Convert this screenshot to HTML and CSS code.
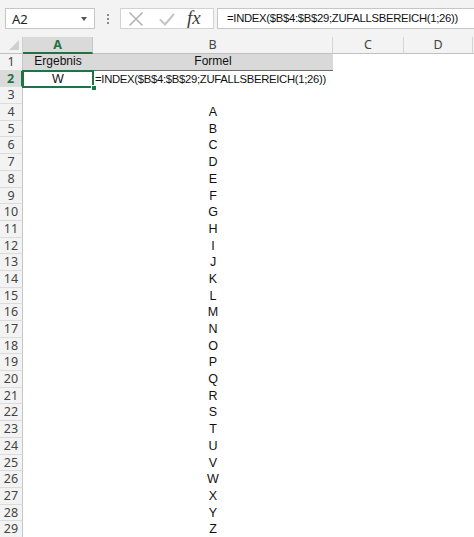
FILE: index.html
```html
<!DOCTYPE html>
<html lang="de">
<head>
<meta charset="utf-8">
<title>Excel</title>
<link rel="stylesheet" href="styles.css">
</head>
<body>
<div class="app">
  <div class="toolbar">
    <div class="namebox"><span class="nb-text">A2</span><span class="nb-arrow"></span></div>
    <div class="dots"><i></i><i></i><i></i></div>
    <div class="iconbox">
      <svg class="ic ic-x" width="16" height="16" viewBox="0 0 16 16"><path d="M1.5 1.5 L14.5 14.5 M14.5 1.5 L1.5 14.5" stroke="#b4b4b4" stroke-width="1.6" fill="none"/></svg>
      <svg class="ic ic-ok" width="18" height="16" viewBox="0 0 18 16"><path d="M2 8.5 L7 13.5 L16 3" stroke="#c4c4c4" stroke-width="2" fill="none"/></svg>
      <span class="fx">fx</span>
    </div>
    <div class="formulabox">=INDEX($B$4:$B$29;ZUFALLSBEREICH(1;26))</div>
  </div>
  <div class="sheet">
    <div class="row colheads">
      <div class="corner"><span class="tri"></span></div>
      <div class="ch ch-sel">A</div>
      <div class="ch">B</div>
      <div class="ch">C</div>
      <div class="ch">D</div>
      <div class="ch"></div>
    </div>
    <div class="row">
      <div class="rh">1</div>
      <div class="c head">Ergebnis</div>
      <div class="c head">Formel</div>
      <div class="c"></div><div class="c"></div><div class="c"></div>
    </div>
    <div class="row">
      <div class="rh rh-sel">2</div>
      <div class="c sel">W<span class="selbox"></span><span class="handle"></span></div>
      <div class="c left">=INDEX($B$4:$B$29;ZUFALLSBEREICH(1;26))</div>
      <div class="c"></div><div class="c"></div><div class="c"></div>
    </div>
    <div class="row"><div class="rh">3</div><div class="c"></div><div class="c"></div><div class="c"></div><div class="c"></div><div class="c"></div></div>
    <div class="row"><div class="rh">4</div><div class="c"></div><div class="c">A</div><div class="c"></div><div class="c"></div><div class="c"></div></div>
    <div class="row"><div class="rh">5</div><div class="c"></div><div class="c">B</div><div class="c"></div><div class="c"></div><div class="c"></div></div>
    <div class="row"><div class="rh">6</div><div class="c"></div><div class="c">C</div><div class="c"></div><div class="c"></div><div class="c"></div></div>
    <div class="row"><div class="rh">7</div><div class="c"></div><div class="c">D</div><div class="c"></div><div class="c"></div><div class="c"></div></div>
    <div class="row"><div class="rh">8</div><div class="c"></div><div class="c">E</div><div class="c"></div><div class="c"></div><div class="c"></div></div>
    <div class="row"><div class="rh">9</div><div class="c"></div><div class="c">F</div><div class="c"></div><div class="c"></div><div class="c"></div></div>
    <div class="row"><div class="rh">10</div><div class="c"></div><div class="c">G</div><div class="c"></div><div class="c"></div><div class="c"></div></div>
    <div class="row"><div class="rh">11</div><div class="c"></div><div class="c">H</div><div class="c"></div><div class="c"></div><div class="c"></div></div>
    <div class="row"><div class="rh">12</div><div class="c"></div><div class="c">I</div><div class="c"></div><div class="c"></div><div class="c"></div></div>
    <div class="row"><div class="rh">13</div><div class="c"></div><div class="c">J</div><div class="c"></div><div class="c"></div><div class="c"></div></div>
    <div class="row"><div class="rh">14</div><div class="c"></div><div class="c">K</div><div class="c"></div><div class="c"></div><div class="c"></div></div>
    <div class="row"><div class="rh">15</div><div class="c"></div><div class="c">L</div><div class="c"></div><div class="c"></div><div class="c"></div></div>
    <div class="row"><div class="rh">16</div><div class="c"></div><div class="c">M</div><div class="c"></div><div class="c"></div><div class="c"></div></div>
    <div class="row"><div class="rh">17</div><div class="c"></div><div class="c">N</div><div class="c"></div><div class="c"></div><div class="c"></div></div>
    <div class="row"><div class="rh">18</div><div class="c"></div><div class="c">O</div><div class="c"></div><div class="c"></div><div class="c"></div></div>
    <div class="row"><div class="rh">19</div><div class="c"></div><div class="c">P</div><div class="c"></div><div class="c"></div><div class="c"></div></div>
    <div class="row"><div class="rh">20</div><div class="c"></div><div class="c">Q</div><div class="c"></div><div class="c"></div><div class="c"></div></div>
    <div class="row"><div class="rh">21</div><div class="c"></div><div class="c">R</div><div class="c"></div><div class="c"></div><div class="c"></div></div>
    <div class="row"><div class="rh">22</div><div class="c"></div><div class="c">S</div><div class="c"></div><div class="c"></div><div class="c"></div></div>
    <div class="row"><div class="rh">23</div><div class="c"></div><div class="c">T</div><div class="c"></div><div class="c"></div><div class="c"></div></div>
    <div class="row"><div class="rh">24</div><div class="c"></div><div class="c">U</div><div class="c"></div><div class="c"></div><div class="c"></div></div>
    <div class="row"><div class="rh">25</div><div class="c"></div><div class="c">V</div><div class="c"></div><div class="c"></div><div class="c"></div></div>
    <div class="row"><div class="rh">26</div><div class="c"></div><div class="c">W</div><div class="c"></div><div class="c"></div><div class="c"></div></div>
    <div class="row"><div class="rh">27</div><div class="c"></div><div class="c">X</div><div class="c"></div><div class="c"></div><div class="c"></div></div>
    <div class="row"><div class="rh">28</div><div class="c"></div><div class="c">Y</div><div class="c"></div><div class="c"></div><div class="c"></div></div>
    <div class="row"><div class="rh">29</div><div class="c"></div><div class="c">Z</div><div class="c"></div><div class="c"></div><div class="c"></div></div>
  </div>
</div>
</body>
</html>
```

FILE: styles.css
```css
* { box-sizing: border-box; }
html, body { margin: 0; padding: 0; }
body {
  width: 474px;
  height: 537px;
  overflow: hidden;
  background: #ffffff;
  font-family: "Liberation Sans", Arial, sans-serif;
}
.app { width: 474px; height: 537px; overflow: hidden; }

/* formula bar */
.toolbar {
  height: 37px;
  background: #f3f3f3;
  display: flex;
  align-items: flex-start;
  padding-top: 8px;
  padding-left: 5px;
  white-space: nowrap;
}
.namebox {
  width: 90px;
  height: 21px;
  background: #fff;
  border: 1px solid #c6c6c6;
  display: flex;
  align-items: center;
  justify-content: space-between;
  padding: 0 7px 0 6px;
  flex: none;
}
.nb-text {
  font-family: "Noto Sans", "Open Sans", sans-serif;
  font-size: 13px;
  color: #222;
}
.nb-arrow {
  width: 0; height: 0;
  border-left: 3px solid transparent;
  border-right: 3px solid transparent;
  border-top: 4px solid #555;
}
.dots {
  width: 25px;
  height: 21px;
  display: flex;
  flex-direction: column;
  align-items: center;
  justify-content: center;
  gap: 2px;
  flex: none;
}
.dots i { display: block; width: 2px; height: 2px; background: #8a8a8a; }
.iconbox {
  width: 94px;
  height: 21px;
  background: #fff;
  border: 1px solid #d2d2d2;
  display: flex;
  align-items: center;
  padding-left: 7px;
  flex: none;
}
.ic { display: block; flex: none; }
.ic-x { margin-right: 14px; }
.ic-ok { margin-right: 11px; }
.fx {
  font-family: "Liberation Serif", "Times New Roman", serif;
  font-style: italic;
  font-size: 19px;
  color: #3c3c3c;
  line-height: 1;
  margin-top: -2px;
}
.formulabox {
  margin-left: 3px;
  width: 262px;
  height: 21px;
  background: #fff;
  border: 1px solid #c6c6c6;
  padding-left: 9px;
  font-size: 11.3px;
  letter-spacing: -0.3px;
  line-height: 19px;
  color: #111;
  flex: none;
}

/* sheet */
.sheet { display: flex; flex-direction: column; }
.row {
  display: grid;
  grid-template-columns: 23px 70px 240px 71px 69px 20px;
  height: 16.7px;
}
.colheads { height: 17px; }
.corner {
  background: #f3f3f3;
  border-right: 1px solid #d0d0d0;
  border-bottom: 1px solid #c0c0c0;
  position: relative;
}
.tri {
  position: absolute;
  right: 3px;
  bottom: 3px;
  width: 0; height: 0;
  border-left: 10px solid transparent;
  border-bottom: 10px solid #cfcfcf;
}
.ch {
  background: #f3f3f3;
  border-right: 1px solid #d4d4d4;
  border-bottom: 1px solid #c0c0c0;
  font-family: "Noto Sans", "Open Sans", sans-serif;
  font-size: 12.5px;
  color: #444;
  text-align: center;
  line-height: 16px;
}
.ch-sel {
  background: #dadada;
  color: #217346;
  font-weight: bold;
  border-bottom: 2px solid #217346;
  border-right-color: #c6c6c6;
  line-height: 15px;
}
.rh {
  background: #f3f3f3;
  border-right: 1px solid #c6c6c6;
  border-bottom: 1px solid #dcdcdc;
  font-family: "Noto Sans", "Open Sans", sans-serif;
  font-size: 12.5px;
  color: #444;
  text-align: center;
  line-height: 16px;
  overflow: hidden;
}
.rh-sel {
  background: #dadada;
  color: #217346;
  font-weight: bold;
  border-right: 2px solid #217346;
}
.c {
  font-size: 12.5px;
  color: #111;
  text-align: center;
  line-height: 16.7px;
  white-space: nowrap;
  position: relative;
}
.head {
  background: #d9d9d9;
  border-bottom: 1px solid #6a6a6a;
  line-height: 15.7px;
  font-size: 12px;
}
.left {
  text-align: left;
  padding-left: 2px;
  overflow: visible;
  font-size: 11.3px;
  letter-spacing: -0.3px;
  z-index: 2;
}
.sel { z-index: 3; }
.selbox {
  position: absolute;
  left: -1px;
  top: -1px;
  right: -1px;
  bottom: -1px;
  border: 2px solid #217346;
  pointer-events: none;
}
.handle {
  position: absolute;
  right: -4px;
  bottom: -4px;
  width: 6px;
  height: 6px;
  background: #217346;
  border: 1px solid #fff;
}
```
